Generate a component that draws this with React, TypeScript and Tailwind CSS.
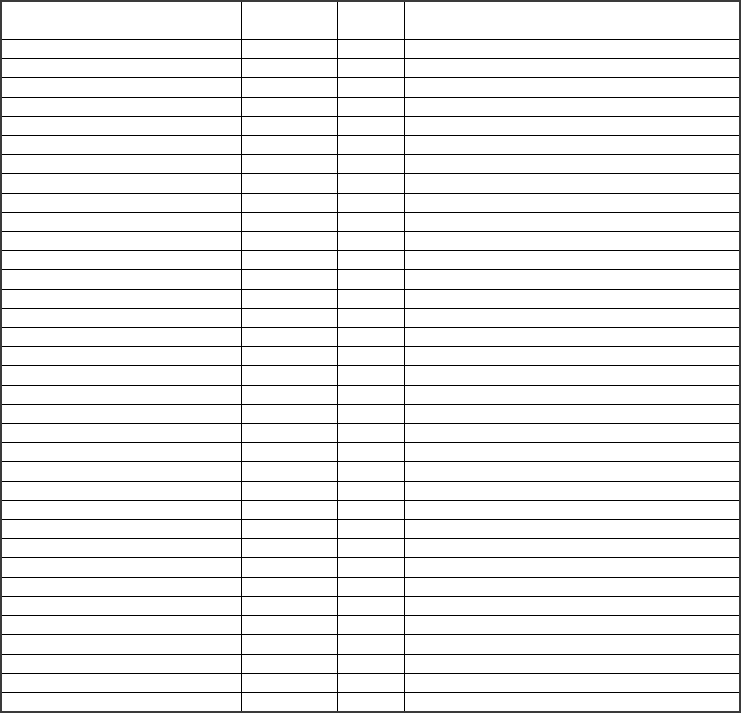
import React from "react";

const rows = Array.from({ length: 35 }, (_, i) => i);

export default function App() {
  return (
    <div className="w-[741px] h-[713px] bg-white" style={{ fontFamily: '"Liberation Sans", Arial, sans-serif' }}>
      <div className="w-full h-full border-2 border-[#3a3a3a] flex flex-col">
        <div className="h-[38px] shrink-0 grid grid-cols-[240px_96px_67px_1fr] border-b border-black">
          <div className="border-r border-black"></div>
          <div className="border-r border-black"></div>
          <div className="border-r border-black"></div>
          <div></div>
        </div>
        {rows.map((i) => (
          <div
            key={i}
            className={
              i < rows.length - 1
                ? "flex-1 grid grid-cols-[240px_96px_67px_1fr] border-b border-black"
                : "flex-1 grid grid-cols-[240px_96px_67px_1fr]"
            }
          >
            <div className="border-r border-black"></div>
            <div className="border-r border-black"></div>
            <div className="border-r border-black"></div>
            <div></div>
          </div>
        ))}
      </div>
    </div>
  );
}
